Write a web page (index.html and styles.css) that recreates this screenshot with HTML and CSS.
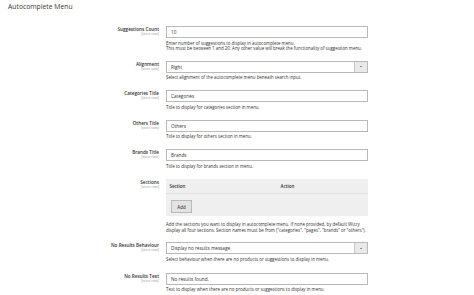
FILE: index.html
```html
<!DOCTYPE html>
<html>
<head>
<meta charset="utf-8">
<link rel="stylesheet" href="styles.css">
</head>
<body>
<div class="page">
  <div class="title">Autocomplete Menu</div>
  <div class="fields">
    <div class="row">
      <div class="label"><span class="name">Suggestions Count</span><span class="scope">[store view]</span></div>
      <div class="control">
        <div class="input">10</div>
        <div class="hint">Enter number of suggestions to display in autocomplete menu.<br>This must be between 1 and 20. Any other value will break the functionality of suggestion menu.</div>
      </div>
    </div>
    <div class="row">
      <div class="label"><span class="name">Alignment</span><span class="scope">[store view]</span></div>
      <div class="control">
        <div class="input select"><span class="val">Right</span><span class="arrow"><i></i></span></div>
        <div class="hint">Select alignment of the autocomplete menu beneath search input.</div>
      </div>
    </div>
    <div class="row">
      <div class="label"><span class="name">Categories Title</span><span class="scope">[store view]</span></div>
      <div class="control">
        <div class="input">Categories</div>
        <div class="hint">Title to display for categories section in menu.</div>
      </div>
    </div>
    <div class="row">
      <div class="label"><span class="name">Others Title</span><span class="scope">[store view]</span></div>
      <div class="control">
        <div class="input">Others</div>
        <div class="hint">Title to display for others section in menu.</div>
      </div>
    </div>
    <div class="row">
      <div class="label"><span class="name">Brands Title</span><span class="scope">[store view]</span></div>
      <div class="control">
        <div class="input">Brands</div>
        <div class="hint">Title to display for brands section in menu.</div>
      </div>
    </div>
    <div class="row row-sec">
      <div class="label"><span class="name">Sections</span><span class="scope">[store view]</span></div>
      <div class="control">
        <div class="table">
          <div class="thead"><span class="col1">Section</span><span class="col2">Action</span></div>
          <div class="tbody"><span class="btn">Add</span></div>
        </div>
        <div class="hint hint-sec">Add the sections you want to display in autocomplete menu. If none provided, by default Wizzy<br>display all four sections. Section names must be from ("categories", "pages", "brands" or "others").</div>
      </div>
    </div>
    <div class="row row-nrb">
      <div class="label"><span class="name">No Results Behaviour</span><span class="scope">[store view]</span></div>
      <div class="control">
        <div class="input select"><span class="val">Display no results message</span><span class="arrow"><i></i></span></div>
        <div class="hint">Select behaviour when there are no products or suggestions to display in menu.</div>
      </div>
    </div>
    <div class="row">
      <div class="label"><span class="name">No Results Text</span><span class="scope">[store view]</span></div>
      <div class="control">
        <div class="input">No results found.</div>
        <div class="hint">Text to display when there are no products or suggestions to display in menu.</div>
      </div>
    </div>
  </div>
</div>
</body>
</html>
```
FILE: styles.css
```css
html, body {
  margin: 0;
  padding: 0;
  background: #ffffff;
}
body {
  font-family: "Open Sans", "Liberation Sans", sans-serif;
  color: #303030;
  overflow: hidden;
}
.page {
  width: 474px;
  height: 295px;
  padding: 2px 0 0 8px;
  box-sizing: border-box;
}
.title {
  font-size: 6.8px;
  line-height: 9px;
  color: #41362f;
  height: 9px;
}
.fields {
  margin-top: 15px;
}
.row {
  display: grid;
  grid-template-columns: 151px 202px;
  column-gap: 7px;
  margin-bottom: 10px;
}
.row-sec {
  margin-bottom: 9px;
}
.row-nrb {
  margin-bottom: 11px;
}
.label {
  text-align: right;
  padding-top: 1px;
  display: flex;
  flex-direction: column;
  align-items: flex-end;
}
.name {
  font-size: 4.65px;
  line-height: 5px;
  font-weight: 600;
  color: #303030;
}
.scope {
  font-size: 3.3px;
  line-height: 3.8px;
  color: #999999;
}
.input {
  height: 12px;
  box-sizing: border-box;
  border: 0.7px solid #b9b9b9;
  background: #fff;
  font-size: 4.7px;
  line-height: 10.6px;
  padding-left: 4px;
  color: #303030;
}
.select {
  display: flex;
  padding-left: 0;
}
.select .val {
  flex: 1;
  padding-left: 4px;
}
.select .arrow {
  width: 12.5px;
  border-left: 0.7px solid #c4c4c4;
  background: #e9e9e9;
  display: flex;
  align-items: center;
  justify-content: center;
}
.select .arrow i {
  display: block;
  width: 0;
  height: 0;
  border-left: 1.3px solid transparent;
  border-right: 1.3px solid transparent;
  border-top: 1.6px solid #333;
}
.hint {
  margin-top: 2.5px;
  font-size: 4.4px;
  line-height: 5px;
  color: #303030;
  white-space: nowrap;
}
.hint-sec {
  margin-top: 5px;
  line-height: 6px;
}
.table {
  background: #efefef;
  height: 37.5px;
  box-sizing: border-box;
}
.thead {
  display: flex;
  height: 14.5px;
  align-items: center;
  border-bottom: 0.6px solid #e0e0e0;
  font-size: 4.5px;
  font-weight: 600;
  color: #303030;
}
.col1 {
  width: 110px;
  padding-left: 3.5px;
}
.col2 {
  padding-left: 1px;
}
.tbody {
  display: flex;
  padding: 6px 0 0 5px;
}
.btn {
  display: flex;
  align-items: center;
  justify-content: center;
  width: 21px;
  height: 13px;
  box-sizing: border-box;
  background: #e3e3e3;
  border: 0.7px solid #b9b9b9;
  font-size: 4.4px;
  font-weight: 600;
  color: #514943;
}
```
